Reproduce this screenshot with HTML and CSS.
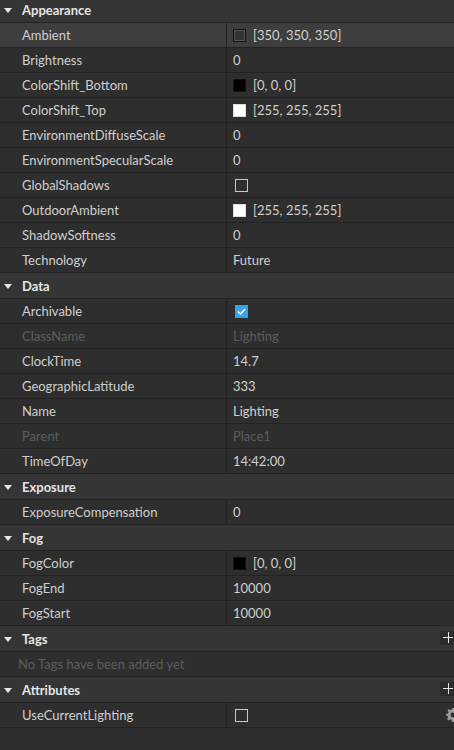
FILE: index.html
```html
<!DOCTYPE html>
<html lang="en">
<head>
    <meta charset="UTF-8">
    <meta name="viewport" content="width=device-width, initial-scale=1.0">
    <title>Properties - Lighting</title>
    <link rel="stylesheet" href="styles.css">
</head>
<body>
    <div class="panel">
        <div class="group-head first"><span class="caret"></span>Appearance</div>
        <div class="prop selected"><div class="name">Ambient</div><div class="value"><span class="swatch dark"></span>[350, 350, 350]</div></div>
        <div class="prop"><div class="name">Brightness</div><div class="value">0</div></div>
        <div class="prop"><div class="name">ColorShift_Bottom</div><div class="value"><span class="swatch black"></span>[0, 0, 0]</div></div>
        <div class="prop"><div class="name">ColorShift_Top</div><div class="value"><span class="swatch white"></span>[255, 255, 255]</div></div>
        <div class="prop"><div class="name">EnvironmentDiffuseScale</div><div class="value">0</div></div>
        <div class="prop"><div class="name">EnvironmentSpecularScale</div><div class="value">0</div></div>
        <div class="prop"><div class="name">GlobalShadows</div><div class="value"><span class="check"></span></div></div>
        <div class="prop"><div class="name">OutdoorAmbient</div><div class="value"><span class="swatch white"></span>[255, 255, 255]</div></div>
        <div class="prop"><div class="name">ShadowSoftness</div><div class="value">0</div></div>
        <div class="prop"><div class="name">Technology</div><div class="value">Future</div></div>

        <div class="group-head"><span class="caret"></span>Data</div>
        <div class="prop"><div class="name">Archivable</div><div class="value"><span class="check on"><svg width="9" height="7" viewBox="0 0 9 7"><path d="M1 3.5 L3.5 6 L8 1" fill="none" stroke="#fff" stroke-width="1.6"/></svg></span></div></div>
        <div class="prop disabled"><div class="name">ClassName</div><div class="value">Lighting</div></div>
        <div class="prop"><div class="name">ClockTime</div><div class="value">14.7</div></div>
        <div class="prop"><div class="name">GeographicLatitude</div><div class="value">333</div></div>
        <div class="prop"><div class="name">Name</div><div class="value">Lighting</div></div>
        <div class="prop disabled"><div class="name">Parent</div><div class="value">Place1</div></div>
        <div class="prop"><div class="name">TimeOfDay</div><div class="value">14:42:00</div></div>

        <div class="group-head"><span class="caret"></span>Exposure</div>
        <div class="prop"><div class="name">ExposureCompensation</div><div class="value">0</div></div>

        <div class="group-head"><span class="caret"></span>Fog</div>
        <div class="prop"><div class="name">FogColor</div><div class="value"><span class="swatch black"></span>[0, 0, 0]</div></div>
        <div class="prop"><div class="name">FogEnd</div><div class="value">10000</div></div>
        <div class="prop"><div class="name">FogStart</div><div class="value">10000</div></div>

        <div class="group-head"><span class="caret"></span>Tags<span class="add"></span></div>
        <div class="empty-note">No Tags have been added yet</div>

        <div class="group-head"><span class="caret"></span>Attributes<span class="add"></span></div>
        <div class="prop"><div class="name">UseCurrentLighting</div><div class="value"><span class="check"></span>
            <svg class="gear" width="14" height="14" viewBox="0 0 14 14"><path d="M6 0h2l.4 2 1.5.7 1.7-1.2 1.4 1.4-1.2 1.7.7 1.5 2 .4v2l-2 .4-.7 1.5 1.2 1.7-1.4 1.4-1.7-1.2-1.5.7L8 14H6l-.4-2-1.5-.7-1.7 1.2-1.4-1.4 1.2-1.7L1.5 8 0 7.6V6l2-.4.7-1.5-1.2-1.7 1.4-1.4 1.7 1.2 1.5-.7z M7 4.6A2.4 2.4 0 1 0 7 9.4A2.4 2.4 0 1 0 7 4.6z" fill="#9a9a9a" fill-rule="evenodd"/></svg>
        </div></div>
    </div>
</body>
</html>
```

FILE: styles.css
```css
:root {
    --panel-bg: #2e2e2e;
    --head-bg: #353535;
    --line: #222222;
    --selected-bg: #3e3e3e;
    --text: #cecece;
    --text-head: #e4e4e4;
    --text-disabled: #5c5c5c;
}

body {
    margin: 0;
    background-color: var(--panel-bg);
    font-family: 'Lato', 'Noto Sans', sans-serif;
    font-size: 13px;
    color: var(--text);
    overflow: hidden;
}

.panel {
    margin-top: -3px;
}

.group-head {
    display: flex;
    align-items: center;
    height: 26px;
    padding-left: 22px;
    position: relative;
    background-color: var(--head-bg);
    border-bottom: 1px solid var(--line);
    box-sizing: border-box;
    font-weight: bold;
    color: var(--text-head);
}

.caret {
    position: absolute;
    left: 4px;
    top: 11px;
    width: 0;
    height: 0;
    border-left: 4px solid transparent;
    border-right: 4px solid transparent;
    border-top: 5px solid #e8e8e8;
}

.add {
    position: absolute;
    right: 0;
    top: 5px;
    width: 14px;
    height: 14px;
    background-color: #2b2b2b;
}

.add::before,
.add::after {
    content: "";
    position: absolute;
    background-color: #e6e6e6;
}

.add::before {
    left: 3px;
    top: 6px;
    width: 10px;
    height: 1px;
}

.add::after {
    left: 8px;
    top: 1px;
    width: 1px;
    height: 11px;
}

.prop {
    display: grid;
    grid-template-columns: 227px 1fr;
    height: 25px;
    border-bottom: 1px solid var(--line);
    box-sizing: border-box;
}

.prop .name {
    display: flex;
    align-items: center;
    padding-left: 22px;
    border-right: 1px solid var(--line);
    white-space: nowrap;
    overflow: hidden;
}

.prop .value {
    display: flex;
    align-items: center;
    padding-left: 6px;
    position: relative;
    white-space: nowrap;
}

.prop.selected {
    background-color: var(--selected-bg);
}

.prop.disabled {
    color: var(--text-disabled);
}

.swatch {
    width: 11px;
    height: 11px;
    margin-right: 7px;
    border: 1px solid #777;
}

.swatch.dark {
    background-color: #333333;
    border-color: #111;
    box-shadow: inset 0 0 0 1px #555;
}

.swatch.black {
    background-color: #000;
    border-color: #111;
}

.swatch.white {
    background-color: #fff;
    border-color: #ddd;
}

.check {
    display: flex;
    align-items: center;
    justify-content: center;
    width: 11px;
    height: 11px;
    margin-left: 2px;
    border: 1px solid #c8c8c8;
}

.check.on {
    background-color: #35a3ea;
    border-color: #35a3ea;
}

.gear {
    position: absolute;
    right: -6px;
    top: 5px;
}

.empty-note {
    display: flex;
    align-items: center;
    height: 25px;
    padding-left: 18px;
    border-bottom: 1px solid var(--line);
    box-sizing: border-box;
    color: var(--text-disabled);
}
```
